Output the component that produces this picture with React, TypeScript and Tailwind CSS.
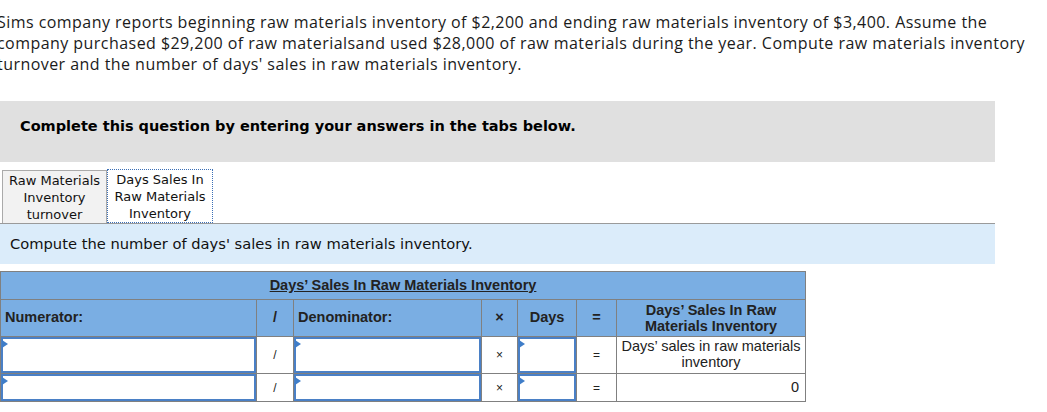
import React from "react";

function InputCell({ h }: { h: string }) {
  return (
    <td className="p-0 border border-[#808080] align-top">
      <div className={`relative w-full bg-white border-2 border-[#4a80c6] box-border ${h}`}>
        <span className="absolute left-[-1px] top-[1px] w-0 h-0 border-t-[4px] border-b-[4px] border-l-[6px] border-t-transparent border-b-transparent border-l-[#3f7dc8]"></span>
      </div>
    </td>
  );
}

export default function App() {
  const tabFont = "font-['DejaVu_Sans','Verdana',sans-serif]";
  const tblFont = "font-['Liberation_Sans','Arial',sans-serif]";
  return (
    <div className="w-[1047px] h-[412px] bg-white overflow-hidden">
      <p className="ml-[-3px] pt-[12px] w-[1049px] text-[16px] leading-[21px] tracking-[0.45px] text-[#1b1b1b] font-['Open_Sans',sans-serif]">
        Sims company reports beginning raw materials inventory of $2,200 and ending raw materials inventory of $3,400. Assume the
        <br />
        company purchased $29,200 of raw materialsand used $28,000 of raw materials during the year. Compute raw materials inventory
        <br />
        turnover and the number of days' sales in raw materials inventory.
      </p>

      <div className={`mt-[26px] w-[995px] h-[61px] bg-[#e0e0e0] pl-[20px] pt-[16px] ${tabFont}`}>
        <div className="text-[14.5px] leading-[18px] font-bold text-black">
          Complete this question by entering your answers in the tabs below.
        </div>
      </div>

      <div className={`mt-[7px] h-[54px] flex items-end pl-[2px] ${tabFont} text-[13px] leading-[17px] text-[#111]`}>
        <div className="w-[105px] h-[53px] border border-b-0 border-[#aaaaaa] bg-[#f2f2f2] text-center pt-[1px]">
          Raw Materials
          <br />
          Inventory
          <br />
          turnover
        </div>
        <div className="w-[106px] h-[54px] bg-white text-center pt-[2px] outline outline-1 outline-dotted outline-[#3b6fb6] outline-offset-[-1px]">
          Days Sales In
          <br />
          Raw Materials
          <br />
          Inventory
        </div>
      </div>

      <div className={`w-[995px] h-[41px] border-t border-[#9a9a9a] bg-[#dbecfa] pl-[10px] pt-[10px] ${tabFont} text-[14.7px] leading-[20px] text-[#111]`}>
        Compute the number of days' sales in raw materials inventory.
      </div>

      <table className={`mt-[7px] w-[805px] table-fixed border-collapse ${tblFont} text-[14.5px] text-[#222]`}>
        <colgroup>
          <col className="w-[256px]" />
          <col className="w-[37px]" />
          <col className="w-[188px]" />
          <col className="w-[36px]" />
          <col className="w-[59px]" />
          <col className="w-[40px]" />
          <col className="w-[189px]" />
        </colgroup>
        <tbody>
          <tr className="h-[28px] bg-[#7aaee3]">
            <td colSpan={7} className="border border-[#808080] text-center font-bold underline">
              Days’ Sales In Raw Materials Inventory
            </td>
          </tr>
          <tr className="h-[37px] bg-[#7aaee3] font-bold">
            <td className="border border-[#808080] pl-[4px]">Numerator:</td>
            <td className="border border-[#808080] text-center">/</td>
            <td className="border border-[#808080] pl-[4px]">Denominator:</td>
            <td className="border border-[#808080] text-center">×</td>
            <td className="border border-[#808080] text-center">Days</td>
            <td className="border border-[#808080] text-center">=</td>
            <td className="border border-[#808080] text-center leading-[16px]">
              Days’ Sales In Raw
              <br />
              Materials Inventory
            </td>
          </tr>
          <tr className="h-[37px] bg-white">
            <InputCell h="h-[36px]" />
            <td className="border border-[#808080] text-center text-[12px]">/</td>
            <InputCell h="h-[36px]" />
            <td className="border border-[#808080] text-center text-[12px]">×</td>
            <InputCell h="h-[36px]" />
            <td className="border border-[#808080] text-center text-[12px]">=</td>
            <td className="border border-[#808080] text-center leading-[16px] text-[#222] align-top pt-[1px]">
              Days’ sales in raw materials
              <br />
              inventory
            </td>
          </tr>
          <tr className="h-[28px] bg-white">
            <InputCell h="h-[27px]" />
            <td className="border border-[#808080] text-center text-[12px]">/</td>
            <InputCell h="h-[27px]" />
            <td className="border border-[#808080] text-center text-[12px]">×</td>
            <InputCell h="h-[27px]" />
            <td className="border border-[#808080] text-center text-[12px]">=</td>
            <td className="border border-[#808080] text-right pr-[6px]">0</td>
          </tr>
        </tbody>
      </table>
    </div>
  );
}
